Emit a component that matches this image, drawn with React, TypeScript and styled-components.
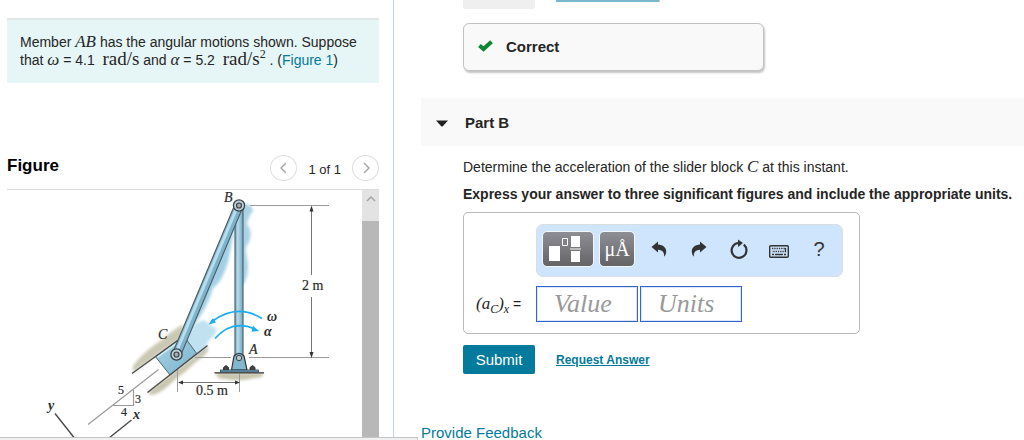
import React from "react";
import styled, { createGlobalStyle } from "styled-components";

const sans = `"Liberation Sans", Arial, sans-serif`;
const serif = `"Liberation Serif", "Times New Roman", serif`;
const teal = "#047a9c";

const GlobalStyle = createGlobalStyle`
  * { box-sizing: border-box; }
  body { margin: 0; background: #fff; color: #252525; font: 14px/18px ${sans}; }
  button, input { font-family: inherit; margin: 0; }
  h2, h3, p { margin: 0; }
`;

const Page = styled.div`
  display: grid;
  grid-template-columns: minmax(0, 394fr) minmax(0, 630fr);
  height: 100vh;
  overflow: hidden;
`;

const Aside = styled.aside`
  display: flex;
  flex-direction: column;
  min-height: 0;
  padding: 18px 14px 3px 7px;
  border-right: 1px solid #c6d3df;
`;

const Prompt = styled.p`
  padding: 13px;
  min-height: 65px;
  border-top: 2px solid #e0e6e7;
  background: #e6f5f6;
`;

const MathText = styled.span<{ $upright?: boolean }>`
  font-family: ${serif};
  font-size: ${(p) => (p.$upright ? "19px" : "17px")};
  line-height: 16px;
  font-style: ${(p) => (p.$upright ? "normal" : "italic")};
  sup, sub { font-size: 12px; line-height: 0; }
`;

const Link = styled.a<{ $strong?: boolean }>`
  color: ${teal};
  text-decoration: ${(p) => (p.$strong ? "underline" : "none")};
  font-weight: ${(p) => (p.$strong ? "bold" : "normal")};
  font-size: ${(p) => (p.$strong ? "12px" : "inherit")};
`;

const FigureHeader = styled.header`
  display: flex;
  align-items: center;
  margin-top: 72px;
  padding-bottom: 8px;
  border-bottom: 1px solid #dcdcdc;
`;

const FigureTitle = styled.h2`
  flex: 1;
  font-size: 17px;
  line-height: 20px;
  color: #000;
  padding-bottom: 5px;
`;

const RoundButton = styled.button`
  display: grid;
  place-items: center;
  width: 27px;
  height: 26px;
  padding: 0;
  border: 1px solid #dedede;
  border-radius: 50%;
  background: #fff;
`;

const Count = styled.span`
  padding: 4px 11px 0;
  font-size: 13px;
`;

const FigureView = styled.div`
  display: flex;
  flex: 1;
  min-height: 0;
  overflow: hidden;
`;

const Drawing = styled.div`
  flex: 1;
  min-width: 0;
  overflow: hidden;
  svg { display: block; }
`;

const ScrollTrack = styled.div`
  display: flex;
  flex-direction: column;
  width: 17px;
  background: #b8b8b8;
`;

const ScrollButton = styled.button`
  display: grid;
  justify-items: center;
  align-content: start;
  height: 31px;
  padding: 4px 0 0;
  border: 0;
  background: #e3e3e3;
`;

const StatusStrip = styled.div`
  position: absolute;
  left: 0;
  bottom: 0;
  width: 418px;
  height: 3px;
  border-top: 1px solid #c4c4c4;
  border-right: 1px solid #c4c4c4;
  background: #f0f0f0;
`;

const Main = styled.main`
  display: flex;
  flex-direction: column;
  padding-left: 27px;
  min-width: 0;
`;

const Body = styled.section`
  padding-left: 42px;
`;

const Actions = styled.div<{ $cut?: boolean }>`
  display: flex;
  align-items: center;
  gap: 21px;
  margin-top: ${(p) => (p.$cut ? "-20px" : "11px")};
`;

const SubmitButton = styled.button`
  width: 72px;
  height: 29px;
  padding: 0;
  border: 0;
  border-radius: 2px;
  background: ${teal};
  color: #fff;
  font-size: 15px;
  &:disabled { background: #efefef; color: #d9d9d9; }
`;

const PreviousLink = styled(Link)`
  text-decoration-thickness: 2px;
  text-decoration-color: #79b8cc;
`;

const Feedback = styled.div`
  display: flex;
  align-items: center;
  gap: 13px;
  width: 301px;
  height: 48px;
  margin-top: 14px;
  padding: 0 14px;
  border: 1px solid #c2c2c2;
  border-radius: 6px;
  background: #f9f9f9;
  box-shadow: 1px 2px 2px #c4c4c4;
  font-weight: bold;
  font-size: 15px;
`;

const PartHeader = styled.header`
  display: flex;
  align-items: center;
  gap: 17px;
  height: 48px;
  margin-top: 27px;
  padding-top: 2px;
  padding-left: 15px;
  background: #f9f9f9;
`;

const PartTitle = styled.h3`
  font-size: 15px;
  line-height: 20px;
`;

const Question = styled.p`
  padding-top: 12px;
`;

const Instruction = styled.p`
  padding-top: 9px;
  font-weight: bold;
  white-space: nowrap;
`;

const AnswerBox = styled.div`
  display: flex;
  flex-direction: column;
  gap: 9px;
  width: 397px;
  height: 122px;
  margin-top: 9px;
  padding: 11px 16px 11px 12px;
  border: 1px solid #b9b9b9;
  border-radius: 5px;
`;

const Toolbar = styled.div`
  display: flex;
  align-items: center;
  height: 53px;
  margin-left: 60px;
  padding-left: 5px;
  padding-bottom: 3px;
  border: 1px solid #d8dde3;
  border-radius: 7px;
  background: #cfe5fe;
`;

const PaletteButton = styled.button<{ $wide?: boolean }>`
  display: grid;
  place-items: center;
  width: ${(p) => (p.$wide ? "52px" : "36px")};
  height: 36px;
  margin-right: 5px;
  padding: 0;
  border: 1px solid #f1f6fb;
  border-radius: 5px;
  background: linear-gradient(#8e8e95, #646467);
  color: #fff;
  font: 20px/24px ${serif};
`;

const ToolButton = styled.button`
  display: grid;
  place-items: center;
  width: 40px;
  height: 32px;
  padding: 0;
  border: 0;
  background: none;
  color: #333;
  font-size: 20px;
`;

const Tools = styled.div`
  display: flex;
  margin-left: -1px;
`;

const EntryRow = styled.div`
  display: flex;
  align-items: center;
`;

const EntryLabel = styled.label`
  width: 60px;
  white-space: nowrap;
`;

const Entry = styled.input`
  width: 102px;
  height: 36px;
  margin-right: 2px;
  padding: 0 0 0 17px;
  border: 1px solid #3465c8;
  box-shadow: inset 0 0 0 1px #dbe5fa;
  font: italic 26px/30px ${serif};
  &::placeholder { color: #999; opacity: 1; }
`;

const FooterLink = styled(Link)`
  margin-top: 50px;
  font-size: 15px;
`;

const Label = styled.text<{ $italic?: boolean; $bold?: boolean; $small?: boolean }>`
  font-family: ${serif};
  font-size: ${(p) => (p.$small ? "12px" : "14px")};
  font-style: ${(p) => (p.$italic ? "italic" : "normal")};
  font-weight: ${(p) => (p.$bold ? "bold" : "normal")};
  fill: #2c2c2c;
  stroke: #2c2c2c;
  stroke-width: ${(p) => (p.$bold ? "0" : "0.2")};
`;

function Mechanism() {
  return (
    <svg width="355" height="248" viewBox="7 190 355 248" role="img" aria-label="Rod AB and link BC driving slider block C">
      <defs>
        <filter id="soft" x="-30%" y="-30%" width="160%" height="160%"><feGaussianBlur stdDeviation="1.5" /></filter>
        <linearGradient id="rod" x1="0" x2="1" y1="0" y2="0">
          <stop offset="0" stopColor="#6fa9c6" /><stop offset="0.35" stopColor="#b9dcea" /><stop offset="1" stopColor="#6ba5c2" />
        </linearGradient>
        <linearGradient id="block" x1="0" x2="1" y1="0" y2="1">
          <stop offset="0" stopColor="#a9d4e5" /><stop offset="1" stopColor="#78b3cd" />
        </linearGradient>
      </defs>

      <g filter="url(#soft)">
        <path d="M240 203 q13 1 13 8 q-5 6 -6 13 q6 8 2 18 q-5 5 -2 16 q3 14 -3 26 h-4 z" fill="#a9d2e6" />
        <path d="M235 226 L228 262 Q222 282 213 288 Q207 308 196 322 L182 338 z" fill="#a3cfe4" />
        <path d="M184 340 Q192 323 204 320 L212 326 Q222 330 209 340 Q205 350 198 355 z" fill="#bfe1f0" />
        <path d="M133 372.500 L182 337.500 L183 324 Q176 329 170 333 Q162 340 153 346 Q140 356 133 366 z" fill="#cbc8b2" />
        <path d="M148 392 L208 346 Q209 351 205 355 Q195 362 186 371 Q176 378 168 386 Q158 395 150 395 z" fill="#c8c5af" />
        <path d="M216 373 H263 Q264 378 255 378 Q240 382 225 379 Q216 379 216 373z" fill="#c8c4ae" />
      </g>

      <g stroke="#9a9a9a" strokeWidth="1" fill="none">
        <path d="M250 205.5H329 M249 357.5H329 M195 357.5H231 M177.500 364V392 M239.500 374V392" />
        <path d="M88 424.500L158.500 369.500 M113 405.500H133.500V390" strokeWidth="1.2" />
      </g>
      <g stroke="#777" strokeWidth="1" fill="none">
        <path d="M311.500 207V275 M311.500 297V356 M179 382.500H194 M194 382.500H239" />
      </g>
      <path d="M311.500 205.500l-2 6h4z M311.500 358l-2 -6h4z M178 382.500l5 -2v4z M240 382.500l-5 -2v4z" fill="#333" />

      <path d="M155.500 356.700L181 338L186 339L196.700 353.500L170 375z" fill="url(#block)" stroke="#4b6674" strokeWidth="1" />
      <path d="M132 373.500L181 338 M147.500 392.500L207.500 345.500" stroke="#4a4a4a" strokeWidth="1.300" />
      <path d="M157 357.500L182 339.500" stroke="#d3eef7" strokeWidth="1.500" />

      <rect x="235" y="207" width="8" height="153" fill="url(#rod)" stroke="#56646c" strokeWidth="1.200" />
      <path d="M239 205.500L176.500 354.500" stroke="#4d5a61" strokeWidth="9.500" strokeLinecap="round" />
      <path d="M239 205.500L176.500 354.500" stroke="#7db4cd" strokeWidth="7.200" strokeLinecap="round" />
      <path d="M238 205L175.500 354" stroke="#b9ddec" strokeWidth="3" />

      <path d="M231.500 370L234 356Q239 350.500 244 356L247 370z" fill="#82b7cf" stroke="#333" strokeWidth="1.200" />
      <path d="M223.500 370v-2.500l2.500 -2 2.500 2v2.500z M250 370v-2.500l2.500 -2 2.500 2v2.500z" fill="#444" stroke="#333" />
      <rect x="220.500" y="370" width="38" height="2" fill="#6ba7c4" stroke="#345" strokeWidth="0.800" />
      <path d="M214.500 372.800H264" stroke="#333" strokeWidth="1.200" />
      <circle cx="239" cy="358" r="2.700" fill="#c0c5c8" stroke="#444" />

      {[[239, 205.5], [176.5, 354.5]].map(([x, y]) => (
        <g key={x} stroke="#3d3d3d">
          <circle cx={x} cy={y} r="5.600" fill="#b3d3e0" strokeWidth="1.300" />
          <circle cx={x} cy={y} r="2.500" fill="#a9adb0" strokeWidth="1.200" />
        </g>
      ))}

      <g fill="none" stroke="#18aef0" strokeWidth="1.700">
        <path d="M262 318.500Q237 303 212 321.500" />
        <path d="M215 338.500Q232 319 255 329" />
      </g>
      <path d="M208.500 324.500l4.500 -6.500 3 4.500z M259 331l-7.500 0.800 1.500 -6z" fill="#18aef0" />

      <path d="M55 413.500L74 437.500 M131.500 420L109 438" stroke="#4a4a4a" strokeWidth="1.400" />

      <Label $italic x="224" y="202">B</Label>
      <Label $italic x="158" y="339">C</Label>
      <Label $italic x="249" y="354">A</Label>
      <Label $italic $bold x="267" y="321">ω</Label>
      <Label $italic $bold x="264" y="336">α</Label>
      <Label x="302" y="290">2 m</Label>
      <Label x="196" y="395">0.5 m</Label>
      <Label $small x="118" y="394">5</Label>
      <Label $small x="135" y="403">3</Label>
      <Label $small x="121" y="416">4</Label>
      <Label $italic $bold x="133" y="419">x</Label>
      <Label $italic $bold x="48" y="410">y</Label>
    </svg>
  );
}

const Chevron = ({ d }: { d: string }) => (
  <svg width="12" height="12" viewBox="0 0 12 12" fill="none" stroke="#a0a0a0" strokeWidth="1.300"><path d={d} /></svg>
);

const CurvedArrow = ({ flip }: { flip?: boolean }) => (
  <svg width="16" height="16" viewBox="0 0 16 16" fill="currentColor">
    <g transform={flip ? "matrix(-1 0 0 1 16 0)" : undefined}>
      <path d="M0.500 6L7 0.500V3.500C12.500 3.800 15.500 7 15.200 11C15 13 14.300 14.800 13 15.800C13.600 11.500 11.500 8.800 7 8.700V11.500z" />
    </g>
  </svg>
);

export default function App() {
  return (
    <>
      <GlobalStyle />
      <Page>
        <Aside>
          <Prompt>
            Member <MathText>AB</MathText> has the angular motions shown. Suppose<br />
            that <MathText>ω</MathText> = 4.1 &nbsp;<MathText $upright>rad/s</MathText> and <MathText>α</MathText> = 5.2 &nbsp;
            <MathText $upright>rad/s<sup>2</sup></MathText> . (<Link href="#figure">Figure 1</Link>)
          </Prompt>
          <FigureHeader>
            <FigureTitle id="figure">Figure</FigureTitle>
            <RoundButton aria-label="Previous figure"><Chevron d="M8 1L3 6L8 11" /></RoundButton>
            <Count>1 of 1</Count>
            <RoundButton aria-label="Next figure"><Chevron d="M4 1L9 6L4 11" /></RoundButton>
          </FigureHeader>
          <FigureView>
            <Drawing><Mechanism /></Drawing>
            <ScrollTrack>
              <ScrollButton aria-label="Scroll up"><Chevron d="M2 7L6 3L10 7" /></ScrollButton>
            </ScrollTrack>
          </FigureView>
        </Aside>

        <Main>
          <Body>
            <Actions $cut>
              <SubmitButton disabled>Submit</SubmitButton>
              <PreviousLink $strong href="#previous">Previous Answers</PreviousLink>
            </Actions>
            <Feedback>
              <svg width="15" height="14" viewBox="0 0 15 14" fill="none" stroke="#0a8635" strokeWidth="4"><path d="M1.500 5.500L5.500 9L13.500 1.700" /></svg>
              Correct
            </Feedback>
          </Body>
          <PartHeader>
            <svg width="12" height="7" viewBox="0 0 12 7" fill="#222"><path d="M0 0.500H12L7 6Q6 7 5 6z" /></svg>
            <PartTitle>Part B</PartTitle>
          </PartHeader>
          <Body>
            <Question>Determine the acceleration of the slider block <MathText>C</MathText> at this instant.</Question>
            <Instruction>Express your answer to three significant figures and include the appropriate units.</Instruction>
            <AnswerBox>
              <Toolbar>
                <PaletteButton $wide aria-label="Templates">
                  <svg width="40" height="28" viewBox="0 0 40 28" fill="#fff">
                    <path d="M1 11h11v15H1z M23 1h9v11h-9z M23 16h9v11h-9z M22 13.500h11v1h-11z" />
                    <path d="M14.500 3.500h5v7h-5z" fill="none" stroke="#fff" />
                  </svg>
                </PaletteButton>
                <PaletteButton aria-label="Units">μÅ</PaletteButton>
                <Tools>
                  <ToolButton aria-label="Undo"><CurvedArrow /></ToolButton>
                  <ToolButton aria-label="Redo"><CurvedArrow flip /></ToolButton>
                  <ToolButton aria-label="Reset">
                    <svg width="18" height="20" viewBox="0 0 18 20">
                      <path d="M13.800 5.700A7.400 7.400 0 1 1 8.500 4" fill="none" stroke="currentColor" strokeWidth="2.200" />
                      <path d="M8 0.500L13 4L8 8z" fill="currentColor" />
                    </svg>
                  </ToolButton>
                  <ToolButton aria-label="Keyboard">
                    <svg width="20" height="18" viewBox="0 -5 20 18" fill="none" stroke="currentColor">
                      <rect x="0.700" y="0.700" width="18.600" height="11.600" rx="1" strokeWidth="1.400" />
                      <path d="M3 3.500h14" strokeDasharray="1.300 1" strokeWidth="1.500" />
                      <path d="M3 6.500h14" strokeDasharray="1.300 1" strokeWidth="1.500" strokeDashoffset="1" />
                      <path d="M3 9.500h2 M6 9.500h8 M15 9.500h2 M16.500 3v4" strokeWidth="1.300" />
                    </svg>
                  </ToolButton>
                  <ToolButton aria-label="Help">?</ToolButton>
                </Tools>
              </Toolbar>
              <EntryRow>
                <EntryLabel htmlFor="value"><MathText>(a<sub>C</sub>)<sub>x</sub></MathText> =</EntryLabel>
                <Entry id="value" placeholder="Value" />
                <Entry aria-label="Units" placeholder="Units" />
              </EntryRow>
            </AnswerBox>
            <Actions>
              <SubmitButton>Submit</SubmitButton>
              <Link $strong href="#answer">Request Answer</Link>
            </Actions>
          </Body>
          <FooterLink href="#feedback">Provide Feedback</FooterLink>
        </Main>
      </Page>
      <StatusStrip />
    </>
  );
}
